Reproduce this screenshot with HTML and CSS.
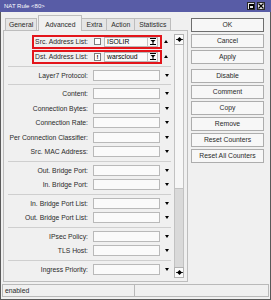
FILE: index.html
```html
<!DOCTYPE html>
<html>
<head>
<meta charset="utf-8">
<link rel="stylesheet" href="styles.css">
</head>
<body>
<div class="window">
  <div class="titlebar">
    <span class="title">NAT Rule &lt;80&gt;</span>
    <span class="tb-btn"><span class="max-ico"></span></span>
    <span class="tb-btn"><svg width="6" height="6" viewBox="0 0 6 6"><path d="M0.5 0.5L5.5 5.5M5.5 0.5L0.5 5.5" stroke="#000" stroke-width="1.2"/></svg></span>
  </div>
  <div class="main">
    <div class="left">
      <div class="tabs">
        <div class="tab">General</div>
        <div class="tab active">Advanced</div>
        <div class="tab">Extra</div>
        <div class="tab">Action</div>
        <div class="tab">Statistics</div>
      </div>
      <div class="panel">
        <div class="form">
          <div class="hl-row">
            <div class="hl-box">
              <span class="label">Src. Address List:</span>
              <span class="chk"></span>
              <span class="combo"><span class="val">ISOLIR</span><span class="cbtn"><svg width="6" height="7" viewBox="0 0 6 7"><path d="M0 0.5H6" stroke="#000"/><path d="M0.5 2H5.5L3 4.5Z" fill="#000"/><path d="M3 4V6" stroke="#000"/><path d="M0 6.5H6" stroke="#000"/></svg></span></span>
            </div>
            <span class="arrow up"></span>
          </div>
          <div class="hl-row">
            <div class="hl-box">
              <span class="label">Dst. Address List:</span>
              <span class="chk neg">!</span>
              <span class="combo"><span class="val">warscloud</span><span class="cbtn"><svg width="6" height="7" viewBox="0 0 6 7"><path d="M0 0.5H6" stroke="#000"/><path d="M0.5 2H5.5L3 4.5Z" fill="#000"/><path d="M3 4V6" stroke="#000"/><path d="M0 6.5H6" stroke="#000"/></svg></span></span>
            </div>
            <span class="arrow up"></span>
          </div>
          <div class="sep"></div>
          <div class="row"><span class="label">Layer7 Protocol:</span><span class="field"></span><span class="arrow"></span></div>
          <div class="sep"></div>
          <div class="row"><span class="label">Content:</span><span class="field"></span><span class="arrow"></span></div>
          <div class="row"><span class="label">Connection Bytes:</span><span class="field"></span><span class="arrow"></span></div>
          <div class="row"><span class="label">Connection Rate:</span><span class="field"></span><span class="arrow"></span></div>
          <div class="row"><span class="label">Per Connection Classifier:</span><span class="field"></span><span class="arrow"></span></div>
          <div class="row"><span class="label">Src. MAC Address:</span><span class="field"></span><span class="arrow"></span></div>
          <div class="sep"></div>
          <div class="row"><span class="label">Out. Bridge Port:</span><span class="field"></span><span class="arrow"></span></div>
          <div class="row"><span class="label">In. Bridge Port:</span><span class="field"></span><span class="arrow"></span></div>
          <div class="sep"></div>
          <div class="row"><span class="label">In. Bridge Port List:</span><span class="field"></span><span class="arrow"></span></div>
          <div class="row"><span class="label">Out. Bridge Port List:</span><span class="field"></span><span class="arrow"></span></div>
          <div class="sep"></div>
          <div class="row"><span class="label">IPsec Policy:</span><span class="field"></span><span class="arrow"></span></div>
          <div class="row"><span class="label">TLS Host:</span><span class="field"></span><span class="arrow"></span></div>
          <div class="sep"></div>
          <div class="row"><span class="label">Ingress Priority:</span><span class="field"></span><span class="arrow"></span></div>
        </div>
        <div class="scroll">
          <div class="sb-btn"><svg width="7" height="5" viewBox="0 0 7 5"><path d="M3.5 0L6 2.5L3.5 5L1 2.5Z" fill="#000"/><path d="M0 2.5H7" stroke="#000" stroke-width="0.8"/></svg></div>
          <div class="sb-thumb"></div>
          <div class="sb-track"></div>
          <div class="sb-btn"><svg width="7" height="5" viewBox="0 0 7 5"><path d="M3.5 0L6 2.5L3.5 5L1 2.5Z" fill="#000"/><path d="M0 2.5H7" stroke="#000" stroke-width="0.8"/></svg></div>
        </div>
      </div>
    </div>
    <div class="buttons">
      <div class="btn default">OK</div>
      <div class="btn">Cancel</div>
      <div class="btn">Apply</div>
      <div class="btn spaced">Disable</div>
      <div class="btn">Comment</div>
      <div class="btn">Copy</div>
      <div class="btn">Remove</div>
      <div class="btn">Reset Counters</div>
      <div class="btn">Reset All Counters</div>
    </div>
  </div>
  <div class="status">
    <div class="cell">enabled</div>
    <div class="cell last"></div>
  </div>
</div>
</body>
</html>
```
FILE: styles.css
```css
* { box-sizing: border-box; }
body {
  margin: 0;
  font-family: "Liberation Sans", Arial, sans-serif;
  font-size: 6.8px;
  color: #2a2a2a;
  background: #f0f0f0;
}
.window {
  width: 271px;
  height: 300px;
  border: 1px solid #5a5a5a;
  border-top: 0;
  background: #f0f0f0;
  display: flex;
  flex-direction: column;
}
.titlebar {
  height: 12px;
  margin: 0 -1px;
  background: #585ca6;
  color: #fff;
  display: flex;
  align-items: center;
  padding: 0 6px 0 4px;
  font-size: 6px;
}
.title { flex: 1; }
.tb-btn {
  width: 8px;
  height: 8px;
  margin-left: 2px;
  background: #e4e4e4;
  border: 1px solid #2a2a2a;
  display: flex;
  align-items: center;
  justify-content: center;
}
.max-ico {
  width: 5px;
  height: 5px;
  border: 1px solid #000;
  border-top-width: 2px;
}
.main {
  display: flex;
  height: 270px;
}
.left {
  width: 189px;
  padding-left: 2px;
  display: flex;
  flex-direction: column;
}
.tabs {
  display: flex;
  align-items: flex-end;
  height: 15px;
  margin-top: 3px;
  padding-left: 2px;
}
.tab {
  height: 12px;
  padding: 0 4px;
  border: 1px solid #bdbdbd;
  border-bottom: 0;
  background: #e5e5e5;
  display: flex;
  align-items: center;
  margin-left: -1px;
  color: #2a2a2a;
}
.tab:first-child { margin-left: 0; margin-right: 2px; padding: 0 3px; }
.tab.active {
  height: 16px;
  margin-bottom: -1px;
  padding: 1px 6px 0;
  background: #f0f0f0;
  position: relative;
  z-index: 1;
}
.panel {
  flex: 1;
  width: 185px;
  border: 1px solid #bdbdbd;
  display: flex;
  padding: 3px 3px 3px 0;
}
.form { width: 170px; }
.row {
  display: grid;
  grid-template-columns: 89px 67px 14px;
  align-items: center;
  height: 14.5px;
}
.label {
  text-align: right;
  padding-right: 5px;
  white-space: nowrap;
}
.field {
  height: 11px;
  border: 1px solid #b9b9b9;
  background: #fafafa;
}
.arrow {
  justify-self: center;
  width: 0;
  height: 0;
  border-left: 2.5px solid transparent;
  border-right: 2.5px solid transparent;
  border-top: 3px solid #000;
}
.arrow.up {
  border-top: 0;
  border-bottom: 3px solid #000;
  margin-left: 2px;
}
.hl-row {
  display: flex;
  align-items: center;
  height: 15px;
  padding-left: 28px;
}
.hl-box {
  width: 130px;
  height: 14px;
  border: 2px solid #e3151b;
  display: flex;
  align-items: center;
}
.hl-box .label {
  width: 54px;
  padding-right: 0;
}
.chk {
  width: 7px;
  height: 7px;
  margin-left: 6px;
  border: 1px solid #7d7d7d;
  background: #fff;
  display: flex;
  align-items: center;
  justify-content: center;
  font-weight: bold;
  font-size: 6px;
  color: #000;
}
.chk.neg { height: 8px; }
.combo {
  width: 54px;
  height: 10px;
  margin-left: 3px;
  border: 1px solid #b9b9b9;
  background: #fafafa;
  display: flex;
}
.combo .val {
  flex: 1;
  padding-left: 2px;
  line-height: 8px;
  color: #000;
}
.cbtn {
  width: 10px;
  border-left: 1px solid #c4c4c4;
  display: flex;
  align-items: center;
  justify-content: center;
}
.sep {
  height: 1px;
  margin: 1.5px 3px 1.5px 4px;
  background: #cfcfcf;
}
.scroll {
  width: 10px;
  display: flex;
  flex-direction: column;
}
.sb-btn {
  height: 11px;
  border: 1px solid #b2b2b2;
  background: #fbfbfb;
  display: flex;
  align-items: center;
  justify-content: center;
}
.sb-thumb {
  height: 144px;
  border: 1px solid #c2c2c2;
  border-top: 0;
  background: #f6f6f6;
}
.sb-track {
  flex: 1;
  background: #d9d9d9;
  border-left: 1px solid #c2c2c2;
  border-right: 1px solid #c2c2c2;
}
.buttons {
  width: 74px;
  padding: 6px 0 0 1px;
  display: flex;
  flex-direction: column;
  gap: 2px;
}
.btn {
  height: 14px;
  border: 1px solid #adadad;
  background: #f7f7f7;
  text-align: center;
  line-height: 12px;
  color: #2a2a2a;
}
.btn.default { border-color: #6e6e6e; }
.btn.spaced { margin-top: 3px; }
.status {
  display: flex;
  height: 13px;
  margin: 2px 1px 0;
  border: 1px solid #b9b9b9;
}
.status .cell {
  width: 132px;
  border-right: 1px solid #b9b9b9;
  padding-left: 2px;
  line-height: 11px;
}
.status .cell.last { flex: 1; border-right: 0; }
```
